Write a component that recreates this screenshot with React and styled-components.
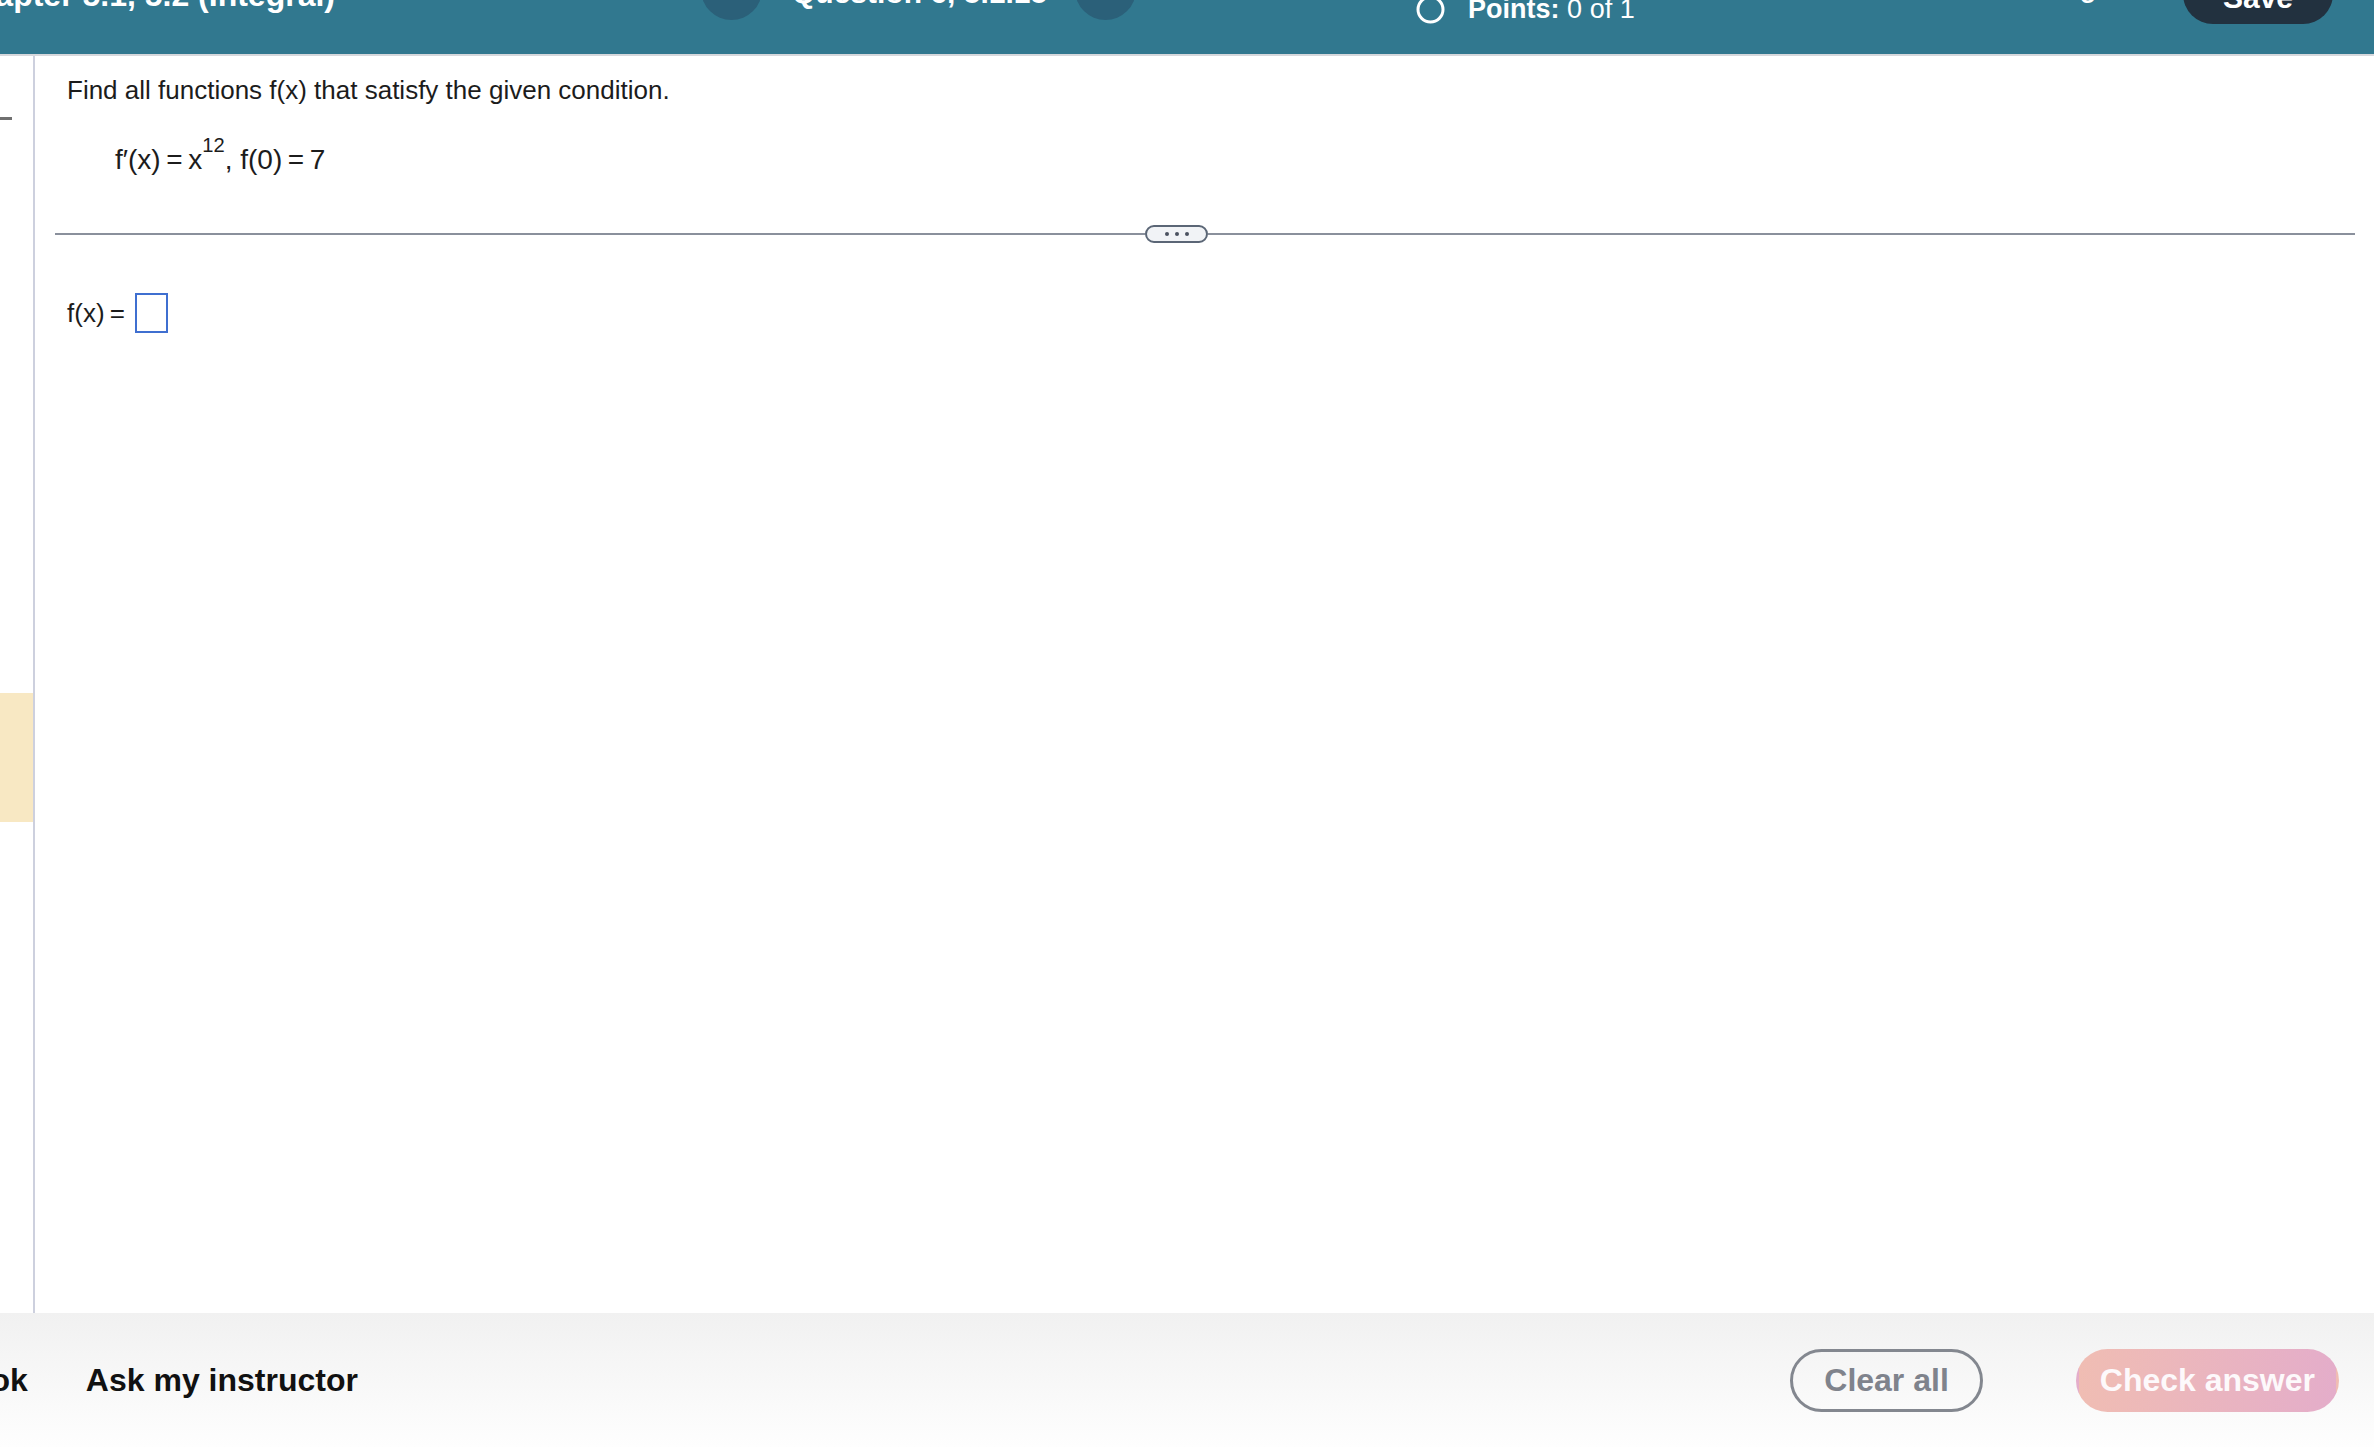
import React from "react";
import styled, { createGlobalStyle } from "styled-components";

const GlobalStyle = createGlobalStyle`
  html, body {
    margin: 0;
    padding: 0;
    height: 100%;
    overflow: hidden;
    background: #fff;
  }
  body {
    font-family: "Liberation Sans", Arial, Helvetica, sans-serif;
    color: #1c1c1c;
  }
  #root {
    height: 100%;
  }
`;

const Page = styled.div`
  display: flex;
  flex-direction: column;
  height: 100vh;
`;

const Header = styled.header`
  flex: 0 0 auto;
  height: 54px;
  background: #31788f;
  border-bottom: 2px solid #d6d8dc;
  overflow: hidden;
`;

const HeaderRow = styled.div`
  display: flex;
  align-items: flex-start;
  padding-right: 41px;
  color: #fff;
`;

const HeaderItem = styled.div`
  flex: 0 0 auto;
  margin-top: ${(p) => p.$top || 0}px;
  margin-left: ${(p) => p.$left || 0}px;
`;

const TitleBox = styled(HeaderItem)`
  width: 335px;
  display: flex;
  justify-content: flex-end;
  overflow: hidden;
  white-space: nowrap;
  font-size: 32px;
  line-height: 36px;
  font-weight: 700;
`;

const NavCircle = styled(HeaderItem)`
  width: 61px;
  height: 61px;
  border-radius: 50%;
  background: #2b6079;
`;

const QuestionLabel = styled(HeaderItem)`
  white-space: nowrap;
  font-size: 30px;
  line-height: 34px;
  font-weight: 700;
`;

const PointsText = styled(HeaderItem)`
  white-space: nowrap;
  font-size: 27px;
  line-height: 30px;

  b {
    font-weight: 700;
  }
`;

const SmallLink = styled(HeaderItem)`
  white-space: nowrap;
  font-size: 27px;
  line-height: 30px;
  font-weight: 700;
`;

const SaveButton = styled(HeaderItem)`
  margin-left: auto;
  width: 150px;
  height: 60px;
  border-radius: 30px;
  background: #22313f;
  color: #fff;
  font-size: 30px;
  font-weight: 700;
  display: flex;
  align-items: center;
  justify-content: center;
  box-sizing: border-box;
  padding-top: 8px;
`;

const Main = styled.div`
  flex: 1 1 auto;
  display: flex;
  min-height: 0;
`;

const Rail = styled.div`
  flex: 0 0 33px;
  display: flex;
  flex-direction: column;
  border-right: 2px solid #cdd0de;
`;

const RailDash = styled.div`
  margin-top: 61px;
  width: 12px;
  height: 3px;
  background: #707070;
`;

const RailFlag = styled.div`
  margin-top: 573px;
  height: 129px;
  background: #f8e8c3;
`;

const Content = styled.div`
  flex: 1 1 auto;
  padding: 19px 19px 0 20px;
`;

const Question = styled.div`
  padding-left: 12px;
`;

const Prompt = styled.p`
  margin: 0;
  font-size: 26px;
  line-height: 30px;
`;

const Equation = styled.p`
  margin: 39px 0 0 48px;
  font-size: 28px;
  line-height: 32px;
  white-space: nowrap;

  sup {
    font-size: 0.72em;
    line-height: 0;
    vertical-align: 17px;
  }
`;

const DividerRow = styled.div`
  margin-top: 49px;
  height: 18px;
  display: flex;
  align-items: center;
`;

const DividerLine = styled.div`
  flex: ${(p) => p.$grow} 1 0;
  height: 2px;
  background: #8a909c;
`;

const MorePill = styled.button`
  flex: 0 0 auto;
  width: 63px;
  height: 18px;
  padding: 0;
  border: 2px solid #5b6676;
  border-radius: 9px;
  background: #f1f3f6;
  display: flex;
  align-items: center;
  justify-content: center;
  gap: 6px;
  box-sizing: border-box;
`;

const Dot = styled.span`
  width: 4px;
  height: 4px;
  border-radius: 50%;
  background: #4b5260;
`;

const AnswerRow = styled.div`
  margin-top: 50px;
  padding-left: 12px;
  display: flex;
  align-items: center;
  gap: 10px;
  font-size: 26px;
  line-height: 30px;
`;

const AnswerBox = styled.div`
  width: 33px;
  height: 40px;
  box-sizing: border-box;
  border: 2px solid #3f6fd0;
  background: #fff;
`;

const Footer = styled.footer`
  flex: 0 0 134px;
  display: flex;
  align-items: center;
  padding-right: 35px;
  background: linear-gradient(to bottom, #f1f1f1, #fefefe);
`;

const FooterLinks = styled.div`
  display: flex;
  align-items: center;
  gap: 58px;
  margin-left: -112px;
  white-space: nowrap;
`;

const FooterLink = styled.a`
  font-size: 32px;
  font-weight: 700;
  color: #111;
  text-decoration: none;
`;

const FooterButtons = styled.div`
  margin-left: auto;
  display: flex;
  align-items: center;
  gap: 93px;
`;

const PillButton = styled.button`
  height: 63px;
  box-sizing: border-box;
  border-radius: 32px;
  font-family: inherit;
  font-size: 32px;
  font-weight: 700;
  white-space: nowrap;
  border: 3px solid ${(p) => (p.$primary ? "transparent" : "#83878f")};
  background: ${(p) =>
    p.$primary ? "linear-gradient(to right, #f0bdb3, #e4adca)" : "transparent"};
  color: ${(p) => (p.$primary ? "#fdf9fb" : "#7f838c")};
  padding: 0 ${(p) => (p.$primary ? 21 : 31)}px;
`;

export default function App() {
  return (
    <Page>
      <GlobalStyle />
      <Header>
        <HeaderRow>
          <TitleBox $top={-23}>Homework: Chapter 5.1, 5.2 (Integral)</TitleBox>
          <NavCircle $top={-41} $left={366} />
          <QuestionLabel $top={-24} $left={30}>
            Question 6, 5.1.15
          </QuestionLabel>
          <NavCircle $top={-41} $left={28} />
          <HeaderItem $top={-6} $left={279}>
            <svg width="31" height="31" viewBox="0 0 31 31">
              <circle cx="15.5" cy="15.5" r="12.5" fill="none" stroke="#fff" strokeWidth="3" />
            </svg>
          </HeaderItem>
          <PointsText $top={-6} $left={22}>
            <b>Points:</b> 0 of 1
          </PointsText>
          <SmallLink $top={-27} $left={370}>
            Settings
          </SmallLink>
          <SaveButton $top={-36}>Save</SaveButton>
        </HeaderRow>
      </Header>

      <Main>
        <Rail>
          <RailDash />
          <RailFlag />
        </Rail>
        <Content>
          <Question>
            <Prompt>Find all functions f(x) that satisfy the given condition.</Prompt>
            <Equation>
              f′(x)&thinsp;=&thinsp;x<sup>12</sup>, f(0)&thinsp;=&thinsp;7
            </Equation>
          </Question>
          <DividerRow>
            <DividerLine $grow={1090} />
            <MorePill aria-label="More">
              <Dot />
              <Dot />
              <Dot />
            </MorePill>
            <DividerLine $grow={1147} />
          </DividerRow>
          <AnswerRow>
            <span>f(x)&thinsp;=</span>
            <AnswerBox />
          </AnswerRow>
        </Content>
      </Main>

      <Footer>
        <FooterLinks>
          <FooterLink>Textbook</FooterLink>
          <FooterLink>Ask my instructor</FooterLink>
        </FooterLinks>
        <FooterButtons>
          <PillButton>Clear all</PillButton>
          <PillButton $primary>Check answer</PillButton>
        </FooterButtons>
      </Footer>
    </Page>
  );
}
